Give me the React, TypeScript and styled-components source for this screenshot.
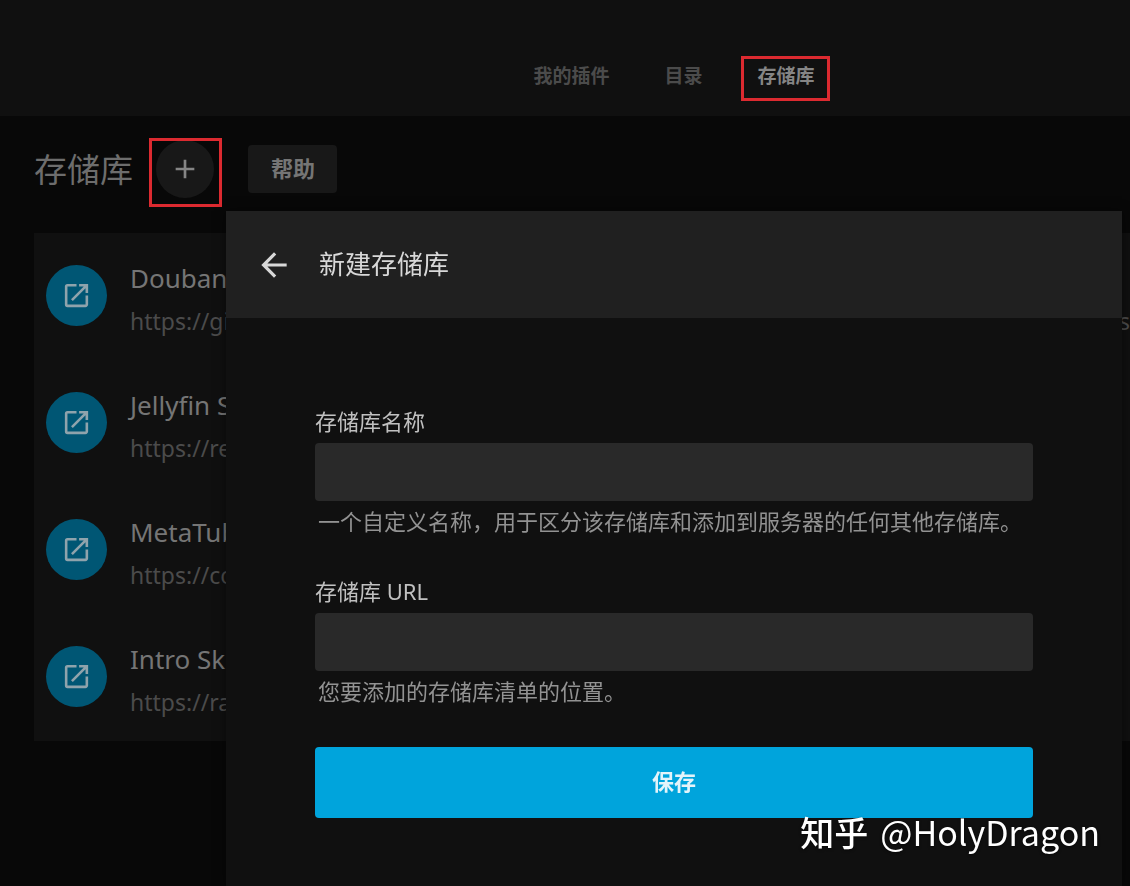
import React from "react";
import styled, { createGlobalStyle, css } from "styled-components";
import { MdAdd, MdArrowBack, MdOpenInNew } from "react-icons/md";

const GlobalStyle = createGlobalStyle`
  *, *::before, *::after { box-sizing: border-box; }
  body {
    margin: 0;
    background: #080808;
    color: #757575;
    font-family: "Noto Sans", "Noto Sans CJK SC", sans-serif;
    font-size: 22px;
    overflow: hidden;
  }
  button, input { font: inherit; }
`;

const Page = styled.div`
  min-height: 100vh;
`;

const TopBar = styled.header`
  height: 116px;
  padding: 36px 8px 0 20%;
  background: #101010;
`;

const Tabs = styled.nav`
  display: flex;
  justify-content: center;
  gap: 55px;
`;

const Tab = styled.a<{ $active?: boolean }>`
  position: relative;
  padding: 26px 0;
  font-size: 19px;
  line-height: 28px;
  font-weight: 700;
  text-decoration: none;
  color: ${(p) => (p.$active ? "#858585" : "#4b4b4b")};
`;

const Highlight = styled.span<{ $kind: "tab" | "add" }>`
  position: absolute;
  border: 3px solid #dc2a30;
  pointer-events: none;
  ${(p) =>
    p.$kind === "tab"
      ? css`
          inset: 20px -15px 15px -17px;
        `
      : css`
          inset: -2px -8px -9px -7px;
        `}
`;

const Main = styled.main`
  padding: 24px 0 0 34px;
`;

const TitleRow = styled.div`
  display: flex;
  align-items: center;
  height: 58px;
`;

const Title = styled.h1`
  margin: 0 23px 0 0;
  padding-top: 2px;
  font-size: 33px;
  line-height: 48px;
  font-weight: 400;
  color: #6d6d6d;
`;

const AddSlot = styled.div`
  position: relative;
  display: flex;
  margin-right: 34px;
`;

const AddButton = styled.button`
  display: grid;
  place-items: center;
  width: 58px;
  height: 58px;
  padding: 0;
  border: 0;
  border-radius: 50%;
  background: #181818;
  color: #858585;
`;

const HelpButton = styled.button`
  height: 48px;
  padding: 0 22px 4px 23px;
  border: 0;
  border-radius: 4px;
  background: #181818;
  color: #757575;
  font-weight: 700;
`;

const List = styled.ul`
  margin: 35px 0 0;
  padding: 0;
  list-style: none;
  background: #101010;
`;

const Row = styled.li`
  display: flex;
  align-items: center;
  gap: 23px;
  height: 127px;
  padding: 0 0 2px 12px;
`;

const OpenLink = styled.a`
  display: grid;
  flex: none;
  place-items: center;
  width: 61px;
  height: 61px;
  border-radius: 50%;
  background: #005674;
  color: #8fa3ac;
`;

const RowText = styled.div`
  flex: 1;
  min-width: 0;
  padding-top: 8px;
`;

const RowName = styled.h2`
  margin: 0 0 5px;
  font-size: 26px;
  line-height: 38px;
  font-weight: 400;
  color: #757575;
`;

const RowUrl = styled.div`
  display: flex;
  justify-content: space-between;
  font-size: 23px;
  line-height: 38px;
  color: #4b4b4b;
`;

const UrlTail = styled.span`
  flex: none;
  width: 11px;
  overflow: hidden;
`;

const Overlay = styled.div`
  position: fixed;
  inset: 0;
  padding: 211px 8px 0 20%;
`;

const Dialog = styled.section`
  height: 100%;
  background: #101010;
  box-shadow: 0 0 10px rgba(0, 0, 0, 0.5);
`;

const DialogHeader = styled.header`
  display: flex;
  align-items: center;
  gap: 26px;
  height: 107px;
  padding-left: 29px;
  background: #202020;
  color: #d8d8d8;
`;

const BackButton = styled.button`
  display: flex;
  padding: 0;
  border: 0;
  background: none;
  color: inherit;
`;

const DialogTitle = styled.h2`
  margin: 0;
  padding-bottom: 2px;
  font-size: 26px;
  line-height: 38px;
  font-weight: 400;
`;

const Form = styled.form`
  display: flex;
  flex-direction: column;
  padding: 87px 89px 0;
`;

const Field = styled.div`
  display: flex;
  flex-direction: column;
  margin-bottom: 32px;
`;

const Label = styled.label`
  height: 38px;
  line-height: 32px;
  color: #c0c0c0;
`;

const Input = styled.input`
  width: 100%;
  height: 58px;
  padding: 0 12px;
  border: 0;
  border-radius: 4px;
  background: #292929;
  color: #d8d8d8;
`;

const Hint = styled.p`
  margin: 0;
  height: 42px;
  padding-left: 3px;
  line-height: 40px;
  white-space: nowrap;
  color: #929292;
`;

const SaveButton = styled.button`
  height: 71px;
  margin-top: 2px;
  padding: 0 0 5px;
  border: 0;
  border-radius: 4px;
  background: #00a4dc;
  color: #e4f4fa;
  font-weight: 700;
`;

const Watermark = styled.div`
  position: fixed;
  right: 30px;
  bottom: 29px;
  display: flex;
  gap: 12px;
  font-family: "Noto Sans CJK SC", sans-serif;
  font-size: 34px;
  line-height: 50px;
  color: #fff;
  text-shadow: 0 1px 3px rgba(0, 0, 0, 0.6);
`;

const Brand = styled.span`
  font-weight: 500;
`;

const repositories = [
  { name: "Douban", url: "https://github", tail: "s" },
  { name: "Jellyfin Stable", url: "https://repo" },
  { name: "MetaTube", url: "https://co" },
  { name: "Intro Skipper", url: "https://raw" },
];

const fields = [
  {
    id: "repo-name",
    label: "存储库名称",
    hint: "一个自定义名称，用于区分该存储库和添加到服务器的任何其他存储库。",
  },
  { id: "repo-url", label: "存储库 URL", hint: "您要添加的存储库清单的位置。" },
];

export default function App() {
  return (
    <Page>
      <GlobalStyle />
      <TopBar>
        <Tabs>
          <Tab href="#installed">我的插件</Tab>
          <Tab href="#catalog">目录</Tab>
          <Tab href="#repositories" $active>
            存储库
            <Highlight $kind="tab" />
          </Tab>
        </Tabs>
      </TopBar>
      <Main>
        <TitleRow>
          <Title>存储库</Title>
          <AddSlot>
            <AddButton type="button" aria-label="添加">
              <MdAdd size={32} />
            </AddButton>
            <Highlight $kind="add" />
          </AddSlot>
          <HelpButton type="button">帮助</HelpButton>
        </TitleRow>
        <List>
          {repositories.map((repo) => (
            <Row key={repo.name}>
              <OpenLink href="#open" aria-label={repo.name}>
                <MdOpenInNew size={31} />
              </OpenLink>
              <RowText>
                <RowName>{repo.name}</RowName>
                <RowUrl>
                  <span>{repo.url}</span>
                  {repo.tail && <UrlTail>{repo.tail}</UrlTail>}
                </RowUrl>
              </RowText>
            </Row>
          ))}
        </List>
      </Main>
      <Overlay>
        <Dialog role="dialog" aria-labelledby="dialog-title">
          <DialogHeader>
            <BackButton type="button" aria-label="返回">
              <MdArrowBack size={38} />
            </BackButton>
            <DialogTitle id="dialog-title">新建存储库</DialogTitle>
          </DialogHeader>
          <Form onSubmit={(e) => e.preventDefault()}>
            {fields.map((field) => (
              <Field key={field.id}>
                <Label htmlFor={field.id}>{field.label}</Label>
                <Input id={field.id} type="text" />
                <Hint>{field.hint}</Hint>
              </Field>
            ))}
            <SaveButton type="submit">保存</SaveButton>
          </Form>
        </Dialog>
      </Overlay>
      <Watermark>
        <Brand>知乎</Brand>
        <span>@HolyDragon</span>
      </Watermark>
    </Page>
  );
}
